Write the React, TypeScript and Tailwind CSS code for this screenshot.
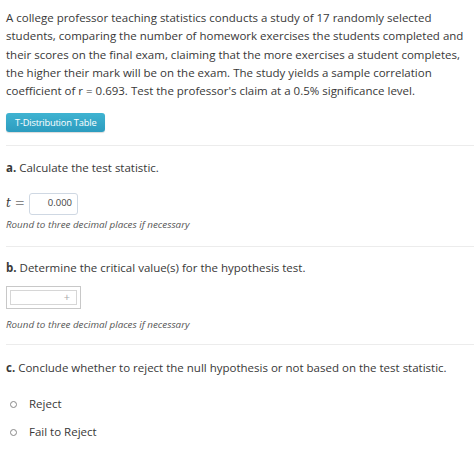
import { useState } from 'react';

export default function App() {
  const [choice, setChoice] = useState<string | null>(null);

  return (
    <div className="w-[474px] h-[467px] bg-white text-[#383838] font-['Open_Sans',sans-serif] text-[11.5px] leading-[18.25px] pl-[6px] pt-[9px] overflow-hidden">
      {/* Enunciado */}
      <p className="pr-1">
        A college professor teaching statistics conducts a study of 17 randomly selected students, comparing the
        number of homework exercises the students completed and their scores on the final exam, claiming that the more
        exercises a student completes, the higher their mark will be on the exam. The study yields a sample
        correlation coefficient of r = 0.693. Test the professor's claim at a 0.5% significance level.
      </p>

      <button className="mt-[13px] h-[19px] px-[9px] rounded-[3px] bg-gradient-to-b from-[#3fb3d1] to-[#2c9cbf] text-white text-[9.3px] leading-[19px] tracking-[-0.2px] shadow-[0_1px_1px_rgba(0,0,0,0.15)]">
        T-Distribution Table
      </button>

      <div className="mt-[13px] border-t border-[#ececec]" />

      {/* Parte a */}
      <div className="mt-[13px]">
        <span className="font-bold">a.</span> Calculate the test statistic.
      </div>
      <div className="mt-[15px] flex items-center h-[22px]">
        <span className="font-['DejaVu_Serif',serif] italic text-[12px] w-[23px]">
          t <span className="not-italic text-[#888]">=</span>
        </span>
        <div className="w-[49px] h-[22px] border border-[#cfd8e3] rounded-[3px] text-[9.5px] text-[#444] flex items-center justify-end pr-[5px]">
          0.000
        </div>
      </div>
      <div className="mt-[3px] italic text-[9.8px] leading-[14px] text-[#555]">Round to three decimal places if necessary</div>

      <div className="mt-[14px] border-t border-[#ececec]" />

      {/* Parte b */}
      <div className="mt-[12px]">
        <span className="font-bold">b.</span> Determine the critical value(s) for the hypothesis test.
      </div>
      <div className="mt-[9px] w-[75px] h-[23px] border border-[#c8c8c8] p-[3px]">
        <div className="h-full border border-[#d6d6d6] flex items-center justify-end pr-[6px] text-[#aaa] text-[11px]">+</div>
      </div>
      <div className="mt-[9px] italic text-[9.8px] leading-[14px] text-[#555]">Round to three decimal places if necessary</div>

      <div className="mt-[12px] border-t border-[#ececec]" />

      {/* Parte c */}
      <div className="mt-[14px]">
        <span className="font-bold">c.</span> Conclude whether to reject the null hypothesis or not based on the test statistic.
      </div>
      <div className="mt-[18px] flex flex-col gap-[10px]">
        {['Reject', 'Fail to Reject'].map((opt) => (
          <label key={opt} className="flex items-center h-[18px] cursor-pointer" onClick={() => setChoice(opt)}>
            <span className="ml-[4px] w-[7px] h-[7px] rounded-full border border-[#888] flex items-center justify-center">
              {choice === opt && <span className="w-[3px] h-[3px] rounded-full bg-[#555]" />}
            </span>
            <span className="ml-[12px]">{opt}</span>
          </label>
        ))}
      </div>
    </div>
  );
}
